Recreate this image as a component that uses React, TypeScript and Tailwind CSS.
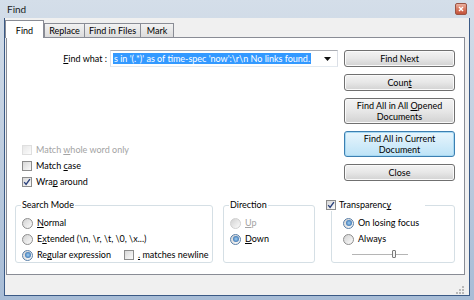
import React from "react";

const ff = "font-['Lato','Liberation_Sans',sans-serif]";

type Kids = { children?: React.ReactNode };

function Check({ checked = false, disabled = false }: { checked?: boolean; disabled?: boolean }) {
    return (
        <span
            className={`flex h-[10px] w-[10px] shrink-0 items-center justify-center border bg-linear-to-br from-[#d8d8d8] to-[#fbfbfb] ${
                disabled ? "border-[#cacaca] opacity-60" : "border-[#8c8c8c]"
            }`}
        >
            {checked && (
                <svg width="8" height="8" viewBox="0 0 8 8">
                    <path d="M1.2 4.1 L3.1 6.4 L6.9 1.1" fill="none" stroke="#2a417c" strokeWidth="1.4" />
                </svg>
            )}
        </span>
    );
}

function Radio({ checked = false, disabled = false }: { checked?: boolean; disabled?: boolean }) {
    return (
        <span
            className={`flex h-[11px] w-[11px] shrink-0 items-center justify-center rounded-full border bg-linear-to-br from-[#d2d2d2] to-[#fcfcfc] ${
                disabled ? "border-[#d0d0d0]" : checked ? "border-[#5a7fa8]" : "border-[#8e8e8e]"
            }`}
        >
            {checked && <span className="h-[6px] w-[6px] rounded-full bg-radial from-[#9fd0f5] to-[#1d5a9d]" />}
        </span>
    );
}

function Btn({ children, focused = false, tall = false }: Kids & { focused?: boolean; tall?: boolean }) {
    return (
        <div
            className={`flex w-[111px] shrink-0 items-center justify-center rounded-[3px] border text-center leading-[11px] ${
                tall ? "h-[26px]" : "h-[17px]"
            } ${
                focused
                    ? "border-[#3c7fb1] bg-linear-to-b from-[#e8f5fc] to-[#bde3f7] shadow-[inset_0_0_0_1px_#a7d9f3]"
                    : "border-[#707070] bg-linear-to-b from-[#f3f3f3] via-[#e7e7e7] to-[#d2d2d2] shadow-[inset_0_0_0_1px_#fafafa]"
            }`}
        >
            <span>{children}</span>
        </div>
    );
}

function Group({ label, className, children }: Kids & { label: React.ReactNode; className?: string }) {
    return (
        <div className={`relative h-[58px] shrink-0 rounded-[3px] border border-[#d5dfe5] ${className ?? ""}`}>
            {label}
            {children}
        </div>
    );
}

function Row({ children, className }: Kids & { className?: string }) {
    return <div className={`flex h-[16px] items-center gap-[4px] ${className ?? ""}`}>{children}</div>;
}

const U = ({ children }: Kids) => <span className="underline underline-offset-1">{children}</span>;

export default function App() {
    return (
        <div
            className={`${ff} flex h-[300px] w-[474px] flex-col overflow-hidden bg-linear-to-b from-[#d4dee9] via-[#bfcddf] to-[#a7bcd6] text-[9px] text-black`}
        >
            {/* Title bar */}
            <div className="flex h-[18px] shrink-0 items-center justify-between pl-[7px] pr-[7px]">
                <span className="text-[10px] text-[#1b1b1b]">Find</span>
                <div className="flex h-[12px] w-[12px] items-center justify-center rounded-[2px] border border-[#9a5444] bg-linear-to-b from-[#eab2a2] via-[#d9785f] to-[#c2523a]">
                    <svg width="6" height="6" viewBox="0 0 6 6">
                        <path d="M1 1 L5 5 M5 1 L1 5" stroke="#fff" strokeWidth="1.4" />
                    </svg>
                </div>
            </div>

            {/* Client area */}
            <div className="mx-[4px] mb-[4px] flex flex-1 flex-col border-x border-b border-[#3b5a86] bg-[#f0f0f0] pr-[4px] pt-[2px]">
                {/* Tabs */}
                <div className="flex h-[17px] items-end">
                    <div className="relative z-10 -mb-px flex h-[18px] w-[39px] justify-center border border-b-0 border-[#898c95] bg-white pt-[3px]">
                        Find
                    </div>
                    <div className="flex h-[14px] w-[41px] items-center justify-center border border-b-0 border-[#898c95] bg-linear-to-b from-[#f2f2f2] to-[#dcdcdc]">
                        Replace
                    </div>
                    <div className="-ml-px flex h-[14px] w-[57px] items-center justify-center border border-b-0 border-[#898c95] bg-linear-to-b from-[#f2f2f2] to-[#dcdcdc]">
                        Find in Files
                    </div>
                    <div className="-ml-px flex h-[14px] w-[34px] items-center justify-center border border-b-0 border-[#898c95] bg-linear-to-b from-[#f2f2f2] to-[#dcdcdc]">
                        Mark
                    </div>
                </div>

                {/* Tab panel */}
                <div className="ml-[1px] flex flex-col border border-[#898c95] bg-white pb-[11px] pt-[12px]">
                    <div className="flex h-[140px]">
                        {/* Left column */}
                        <div className="flex w-[337px] flex-col">
                            <div className="flex h-[17px] items-center">
                                <span className="w-[103px] pr-[3px] text-right">
                                    <U>F</U>ind what :
                                </span>
                                <div className="flex h-[17px] w-[228px] items-center border border-[#abadb3] border-b-[#e3e9ef] border-x-[#dbdfe6] bg-white pl-[2px] pr-[6px]">
                                    <div className="min-w-0 flex-1 overflow-hidden">
                                        <span className="whitespace-pre bg-[#3399ff] px-[1px] leading-[13px] text-white">
                                            {"s in '(.*)' as of time-spec 'now':\\r\\n No links found."}
                                        </span>
                                    </div>
                                    <svg width="7" height="4" viewBox="0 0 7 4" className="ml-[4px] shrink-0">
                                        <path d="M0 0 L7 0 L3.5 4 Z" fill="#111" />
                                    </svg>
                                </div>
                            </div>

                            <div className="mt-[75px] flex flex-col pl-[15px]">
                                <Row className="text-[#a3a3a3]">
                                    <Check disabled />
                                    <span>
                                        Match <U>w</U>hole word only
                                    </span>
                                </Row>
                                <Row>
                                    <Check />
                                    <span>
                                        Match <U>c</U>ase
                                    </span>
                                </Row>
                                <Row>
                                    <Check checked />
                                    <span>
                                        Wra<U>p</U> around
                                    </span>
                                </Row>
                            </div>
                        </div>

                        {/* Buttons */}
                        <div className="flex flex-col gap-[7px]">
                            <Btn>Find Next</Btn>
                            <Btn>
                                Coun<U>t</U>
                            </Btn>
                            <Btn tall>
                                Find All in All <U>O</U>pened
                                <br />
                                Documents
                            </Btn>
                            <Btn tall focused>
                                Find All in Current
                                <br />
                                Document
                            </Btn>
                            <Btn>Close</Btn>
                        </div>
                    </div>

                    {/* Group boxes */}
                    <div className="mt-[15px] flex pl-[8px]">
                        <Group
                            className="w-[198px]"
                            label={<span className="absolute -top-[7px] left-[5px] bg-white px-[1px] leading-[12px]">Search Mode</span>}
                        >
                            <div className="flex flex-col pl-[6px] pt-[9px]">
                                <Row>
                                    <Radio />
                                    <span>
                                        <U>N</U>ormal
                                    </span>
                                </Row>
                                <Row>
                                    <Radio />
                                    <span>
                                        E<U>x</U>tended (\n, \r, \t, \0, \x...)
                                    </span>
                                </Row>
                                <Row>
                                    <Radio checked />
                                    <span>
                                        Re<U>g</U>ular expression
                                    </span>
                                    <span className="ml-[9px] flex items-center gap-[4px]">
                                        <Check />
                                        <span>
                                            <U>.</U> matches newline
                                        </span>
                                    </span>
                                </Row>
                            </div>
                        </Group>

                        <Group
                            className="ml-[10px] w-[92px]"
                            label={<span className="absolute -top-[7px] left-[5px] bg-white px-[1px] leading-[12px]">Direction</span>}
                        >
                            <div className="flex flex-col pl-[6px] pt-[9px]">
                                <Row className="text-[#a3a3a3]">
                                    <Radio disabled />
                                    <span>
                                        <U>U</U>p
                                    </span>
                                </Row>
                                <Row>
                                    <Radio checked />
                                    <span>
                                        <U>D</U>own
                                    </span>
                                </Row>
                            </div>
                        </Group>

                        <Group
                            className="ml-[16px] w-[124px]"
                            label={
                                <span className="absolute -top-[7px] -left-[6px] flex h-[12px] w-[99px] items-center gap-[3px] bg-white">
                                    <Check checked />
                                    <span>
                                        Transparenc<U>y</U>
                                    </span>
                                </span>
                            }
                        >
                            <div className="flex flex-col pl-[11px] pt-[9px]">
                                <Row>
                                    <Radio checked />
                                    <span>On losing focus</span>
                                </Row>
                                <Row>
                                    <Radio />
                                    <span>Always</span>
                                </Row>
                                {/* trackbar */}
                                <div className="ml-[9px] flex h-[14px] w-[56px] items-center">
                                    <div className="h-[1px] w-[40px] bg-[#b5b5b5]" />
                                    <div className="h-[8px] w-[4px] rounded-[1px] border border-[#7a7a7a] bg-[#f4f4f4]" />
                                    <div className="h-[1px] flex-1 bg-[#b5b5b5]" />
                                </div>
                            </div>
                        </Group>
                    </div>
                </div>

                {/* Status strip with size grip */}
                <div className="flex flex-1 items-end justify-end pb-[1px] pr-[1px]">
                    <svg width="8" height="8" viewBox="0 0 8 8">
                        <g fill="#b9b9b9">
                            <rect x="6" y="0" width="2" height="2" />
                            <rect x="3" y="3" width="2" height="2" />
                            <rect x="6" y="3" width="2" height="2" />
                            <rect x="0" y="6" width="2" height="2" />
                            <rect x="3" y="6" width="2" height="2" />
                            <rect x="6" y="6" width="2" height="2" />
                        </g>
                    </svg>
                </div>
            </div>
        </div>
    );
}
